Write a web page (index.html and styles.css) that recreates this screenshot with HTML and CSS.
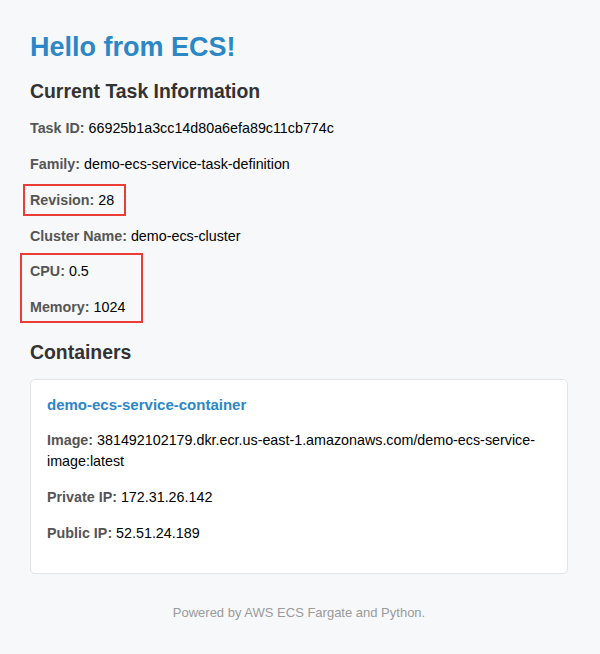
FILE: index.html
```html
<!DOCTYPE html>
<html>
<head>
<meta charset="utf-8">
<link rel="stylesheet" href="styles.css">
</head>
<body>
<div class="page">
  <h1 class="title">Hello from ECS!</h1>
  <h2 class="section">Current Task Information</h2>
  <p class="row"><span class="label">Task ID:</span> 66925b1a3cc14d80a6efa89c11cb774c</p>
  <p class="row"><span class="label">Family:</span> demo-ecs-service-task-definition</p>
  <p class="row"><span class="mark"><span class="label">Revision:</span> 28</span></p>
  <p class="row"><span class="label">Cluster Name:</span> demo-ecs-cluster</p>
  <div class="mark-group">
    <p class="row"><span class="label">CPU:</span> 0.5</p>
    <p class="row"><span class="label">Memory:</span> 1024</p>
  </div>
  <h2 class="section section-containers">Containers</h2>
  <div class="card">
    <h3 class="card-title">demo-ecs-service-container</h3>
    <p class="row row-image"><span class="label">Image:</span> 381492102179.dkr.ecr.us-east-1.amazonaws.com/demo-ecs-service-image:latest</p>
    <p class="row"><span class="label">Private IP:</span> 172.31.26.142</p>
    <p class="row"><span class="label">Public IP:</span> 52.51.24.189</p>
  </div>
  <p class="footer">Powered by AWS ECS Fargate and Python.</p>
</div>
</body>
</html>
```
FILE: styles.css
```css
html, body {
  margin: 0;
  padding: 0;
  background: #f7f8fa;
}
body {
  font-family: "Liberation Sans", Arial, Helvetica, sans-serif;
  color: #000;
  font-size: 14.3px;
}
.page {
  padding: 32px 32px 0 30px;
}
.title {
  margin: 0;
  font-size: 27px;
  line-height: 30px;
  color: #2b87c6;
  font-weight: bold;
}
.section {
  margin: 18px 0 0 0;
  font-size: 19.4px;
  line-height: 23px;
  color: #333;
  font-weight: bold;
}
.section-containers {
  margin-top: 18px;
}
.row {
  margin: 14px 0 0 0;
  line-height: 22px;
}
.label {
  font-weight: bold;
  color: #555;
}
.mark {
  display: inline-block;
  outline: 2px solid #ea3d35;
  outline-offset: 0;
  padding: 3px 10px 3px 5px;
  margin: -3px 0 -3px -5px;
}
.mark-group {
  margin: 6px 0 0 -10px;
  padding: 5px 0 3px 8px;
  width: 111px;
  border: 2px solid #ea3d35;
}
.mark-group .row:first-child {
  margin-top: 0;
}
.card {
  margin-top: 15px;
  background: #fff;
  border: 1px solid #e2e4e6;
  border-radius: 5px;
  padding: 16px 16px 29px 16px;
}
.card-title {
  margin: 0;
  font-size: 15px;
  line-height: 18px;
  color: #2b87c6;
  font-weight: bold;
}
.card .row-image {
  margin-top: 16px;
  line-height: 21px;
}
.footer {
  margin: 30px 0 0 0;
  text-align: center;
  color: #9a9a9a;
  font-size: 13px;
  line-height: 18px;
}
```
